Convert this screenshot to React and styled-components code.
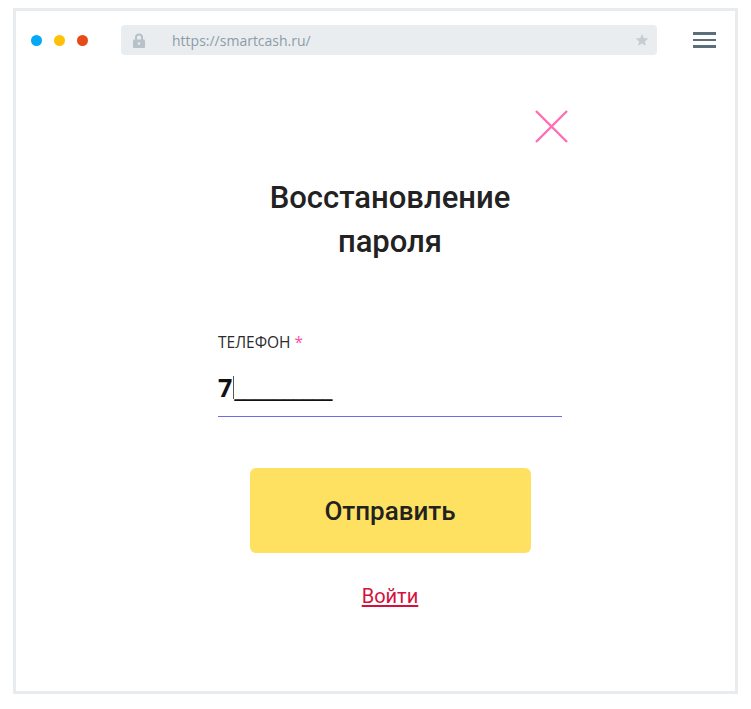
import React from "react";
import styled, { createGlobalStyle } from "styled-components";

const Global = createGlobalStyle`
  html, body {
    margin: 0;
    padding: 0;
    background: #ffffff;
  }
  body {
    font-family: "Roboto", "Liberation Sans", sans-serif;
  }
`;

const Page = styled.div`
  padding: 8px 0 0 13px;
`;

const Frame = styled.div`
  box-sizing: border-box;
  width: 725px;
  height: 686px;
  border: 3px solid #e9ecef;
  display: flex;
  flex-direction: column;
`;

const Toolbar = styled.div`
  display: flex;
  align-items: center;
  padding: 14px 19px 0 15px;
`;

const Dots = styled.div`
  display: flex;
  gap: 12px;
  margin-right: 33px;
`;

const Dot = styled.span`
  width: 11px;
  height: 11px;
  border-radius: 50%;
  background: ${(p) => p.color};
`;

const AddressBar = styled.div`
  width: 536px;
  height: 30px;
  border-radius: 4px;
  background: #e9edf0;
  display: flex;
  align-items: center;
  padding: 0 8px 0 12px;
  box-sizing: border-box;
`;

const Url = styled.span`
  flex: 1;
  margin-left: 27px;
  font-family: "Open Sans", "Liberation Sans", sans-serif;
  font-size: 14px;
  color: #8e9ca6;
`;

const Menu = styled.div`
  margin-left: 36px;
  width: 23px;
  display: flex;
  flex-direction: column;
  gap: 4px;
`;

const MenuLine = styled.span`
  height: 2.5px;
  background: #5b6f7b;
`;

const Column = styled.div`
  width: 344px;
  margin-left: 202px;
  display: flex;
  flex-direction: column;
`;

const CloseButton = styled.button`
  align-self: flex-end;
  margin: 55px -6px 0 0;
  padding: 0;
  border: none;
  background: none;
  width: 33px;
  height: 33px;
  cursor: pointer;
  display: block;
`;

const Title = styled.h1`
  margin: 33px 0 0;
  font-family: "Roboto", sans-serif;
  font-weight: 500;
  font-size: 31px;
  line-height: 44px;
  color: #222222;
  text-align: center;
`;

const Label = styled.label`
  margin-top: 68px;
  font-family: "Open Sans", "Liberation Sans", sans-serif;
  font-size: 15.5px;
  line-height: 20px;
  color: #2b2b2b;
`;

const Required = styled.span`
  color: #ff4fa3;
`;

const PhoneField = styled.div`
  margin-top: 20px;
  padding-bottom: 14px;
  border-bottom: 1px solid #6a6edf;
  font-family: "Open Sans", "Liberation Sans", sans-serif;
  font-weight: 700;
  font-size: 25px;
  line-height: 30px;
  color: #111111;
  display: flex;
  align-items: center;
`;

const Caret = styled.span`
  width: 1px;
  height: 23px;
  background: #555;
  margin: 0 0 0 1px;
`;

const Mask = styled.span`
  letter-spacing: -0.5px;
`;

const Submit = styled.button`
  align-self: center;
  margin-top: 51px;
  width: 281px;
  height: 85px;
  border: none;
  border-radius: 6px;
  background: #ffe162;
  font-family: "Roboto", sans-serif;
  font-weight: 500;
  font-size: 26px;
  color: #222222;
  cursor: pointer;
`;

const LoginLink = styled.a`
  align-self: center;
  margin-top: 31px;
  font-family: "Roboto", sans-serif;
  font-size: 20px;
  line-height: 24px;
  color: #d4113c;
  text-decoration: underline;
  text-underline-offset: 2px;
`;

function LockIcon() {
  return (
    <svg width="12" height="15" viewBox="0 0 12 15">
      <path d="M3 7V4.5a3 3 0 0 1 6 0V7" fill="none" stroke="#b7c1c8" strokeWidth="2" />
      <rect x="0" y="6.5" width="12" height="8.5" rx="1" fill="#b7c1c8" />
      <circle cx="6" cy="10.5" r="1.3" fill="#e9edf0" />
    </svg>
  );
}

function StarIcon() {
  return (
    <svg width="14" height="14" viewBox="0 0 24 24">
      <path
        d="M12 1.5l3.1 7.1 7.7.7-5.8 5.1 1.7 7.6L12 18l-6.7 4 1.7-7.6L1.2 9.3l7.7-.7z"
        fill="#c5cdd3"
      />
    </svg>
  );
}

function CloseIcon() {
  return (
    <svg width="33" height="33" viewBox="0 0 33 33">
      <path d="M1 1L32 32M32 1L1 32" stroke="#ff6db5" strokeWidth="2.4" />
    </svg>
  );
}

export default function App() {
  return (
    <Page>
      <Global />
      <Frame>
        <Toolbar>
          <Dots>
            <Dot color="#03a9f4" />
            <Dot color="#ffc107" />
            <Dot color="#e64a19" />
          </Dots>
          <AddressBar>
            <LockIcon />
            <Url>https://smartcash.ru/</Url>
            <StarIcon />
          </AddressBar>
          <Menu>
            <MenuLine />
            <MenuLine />
            <MenuLine />
          </Menu>
        </Toolbar>

        <Column>
          <CloseButton aria-label="Закрыть">
            <CloseIcon />
          </CloseButton>
          <Title>
            Восстановление
            <br />
            пароля
          </Title>
          <Label>
            ТЕЛЕФОН <Required>*</Required>
          </Label>
          <PhoneField>
            7<Caret />
            <Mask>__________</Mask>
          </PhoneField>
          <Submit>Отправить</Submit>
          <LoginLink href="#">Войти</LoginLink>
        </Column>
      </Frame>
    </Page>
  );
}
